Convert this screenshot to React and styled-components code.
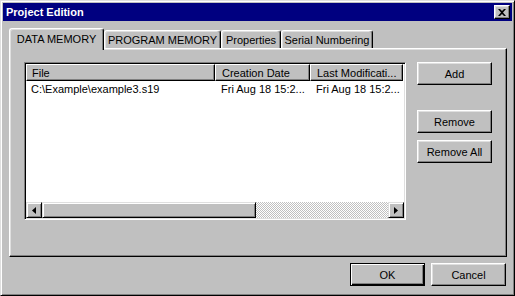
import React from 'react';
import styled, { createGlobalStyle } from 'styled-components';

const GlobalStyle = createGlobalStyle`
  body {
    margin: 0;
    background: #c0c0c0;
    font-family: "Liberation Sans", Arial, sans-serif;
    font-size: 11px;
  }
`;

const Window = styled.div`
  width: 515px;
  height: 296px;
  box-sizing: border-box;
  background: #c0c0c0;
  border: 1px solid;
  border-color: #dfdfdf #000 #000 #dfdfdf;
  box-shadow: inset 1px 1px #fff, inset -1px -1px #808080;
  padding: 2px;
  display: flex;
  flex-direction: column;
`;

const TitleBar = styled.div`
  height: 18px;
  background: #000080;
  color: #fff;
  font-weight: bold;
  font-size: 11px;
  display: flex;
  align-items: center;
  justify-content: space-between;
  padding: 0 2px 0 3px;
`;

const CloseButton = styled.div`
  width: 16px;
  height: 14px;
  box-sizing: border-box;
  background: #c0c0c0;
  border: 1px solid;
  border-color: #fff #000 #000 #fff;
  box-shadow: inset -1px -1px #808080, inset 1px 1px #dfdfdf;
  display: flex;
  align-items: center;
  justify-content: center;
`;

const Body = styled.div`
  padding: 7px 5px 0 6px;
  display: flex;
  flex-direction: column;
`;

const TabRow = styled.div`
  display: flex;
  align-items: flex-end;
  height: 20px;
`;

const Tab = styled.div`
  position: relative;
  z-index: ${(p) => (p.$active ? 2 : 1)};
  box-sizing: border-box;
  width: ${(p) => p.$w}px;
  height: ${(p) => (p.$active ? 22 : 18)}px;
  margin-bottom: ${(p) => (p.$active ? -2 : 0)}px;
  background: #c0c0c0;
  border-top: 1px solid #fff;
  border-left: 1px solid #fff;
  border-right: 1px solid #000;
  border-radius: 3px 3px 0 0;
  box-shadow: inset -1px 0 #808080, inset 1px 1px #dfdfdf;
  display: flex;
  align-items: ${(p) => (p.$active ? 'flex-start' : 'center')};
  padding-top: ${(p) => (p.$active ? 4 : 0)}px;
  justify-content: center;
  color: #000;
  white-space: nowrap;
`;

const Panel = styled.div`
  height: 209px;
  box-sizing: border-box;
  border: 1px solid;
  border-color: #fff #000 #000 #fff;
  box-shadow: inset -1px -1px #808080, inset 1px 1px #dfdfdf;
  padding: 13px 0 0 14px;
  display: flex;
  gap: 11px;
  align-items: flex-start;
`;

const ListView = styled.div`
  width: 382px;
  height: 158px;
  box-sizing: border-box;
  background: #fff;
  border: 1px solid;
  border-color: #808080 #fff #fff #808080;
  box-shadow: inset 1px 1px #000, inset -1px -1px #dfdfdf;
  padding: 1px;
  display: flex;
  flex-direction: column;
`;

const HeaderRow = styled.div`
  display: flex;
  height: 17px;
`;

const HeaderCell = styled.div`
  box-sizing: border-box;
  width: ${(p) => p.$w}px;
  height: 17px;
  background: #c0c0c0;
  border: 1px solid;
  border-color: #fff #000 #000 #fff;
  box-shadow: inset -1px -1px #808080;
  padding-left: ${(p) => p.$pad}px;
  display: flex;
  align-items: center;
  white-space: nowrap;
  overflow: hidden;
`;

const Rows = styled.div`
  flex: 1;
  padding-top: 1px;
`;

const Row = styled.div`
  display: flex;
  height: 14px;
  align-items: center;
`;

const Cell = styled.div`
  box-sizing: border-box;
  width: ${(p) => p.$w}px;
  padding-left: ${(p) => p.$pad}px;
  white-space: nowrap;
  overflow: hidden;
`;

const ScrollBar = styled.div`
  display: flex;
  height: 16px;
`;

const ArrowButton = styled.div`
  width: 16px;
  height: 16px;
  box-sizing: border-box;
  background: #c0c0c0;
  border: 1px solid;
  border-color: #dfdfdf #000 #000 #dfdfdf;
  box-shadow: inset 1px 1px #fff, inset -1px -1px #808080;
  display: flex;
  align-items: center;
  justify-content: center;
`;

const Thumb = styled(ArrowButton)`
  width: ${(p) => p.$w}px;
`;

const Track = styled.div`
  flex: 1;
  background: repeating-conic-gradient(#fff 0 25%, #c0c0c0 0 50%) 0 0 / 2px 2px;
`;

const SideButtons = styled.div`
  display: flex;
  flex-direction: column;
`;

const Button = styled.div`
  width: 75px;
  height: 23px;
  box-sizing: border-box;
  background: #c0c0c0;
  border: 1px solid;
  border-color: ${(p) => (p.$default ? '#000' : '#fff #000 #000 #fff')};
  box-shadow: ${(p) =>
    p.$default
      ? 'inset 1px 1px #fff, inset -1px -1px #000, inset -2px -2px #808080'
      : 'inset -1px -1px #808080, inset 1px 1px #dfdfdf'};
  display: flex;
  align-items: center;
  justify-content: center;
  color: #000;
  margin-top: ${(p) => p.$top || 0}px;
`;

const Footer = styled.div`
  display: flex;
  justify-content: flex-end;
  gap: 6px;
  margin-top: 6px;
  padding-right: 1px;
`;

const columns = [
  { title: 'File', w: 189, pad: 5 },
  { title: 'Creation Date', w: 95, pad: 6 },
  { title: 'Last Modificati...', w: 93, pad: 6 },
];

const rows = [['C:\\Example\\example3.s19', 'Fri Aug 18 15:2...', 'Fri Aug 18 15:2...']];

const tabs = [
  { label: 'DATA MEMORY', w: 95, active: true },
  { label: 'PROGRAM MEMORY', w: 117 },
  { label: 'Properties', w: 60 },
  { label: 'Serial Numbering', w: 92 },
];

export default function App() {
  return (
    <>
      <GlobalStyle />
      <Window>
        <TitleBar>
          <span>Project Edition</span>
          <CloseButton>
            <svg width="8" height="7" viewBox="0 0 8 7">
              <path d="M0 0h2l2 2 2-2h2L5 3.5 8 7H6L4 5 2 7H0l3-3.5z" fill="#000" />
            </svg>
          </CloseButton>
        </TitleBar>
        <Body>
          <TabRow>
            {tabs.map((t) => (
              <Tab key={t.label} $w={t.w} $active={t.active}>
                {t.label}
              </Tab>
            ))}
          </TabRow>
          <Panel>
            <ListView>
              <HeaderRow>
                {columns.map((c) => (
                  <HeaderCell key={c.title} $w={c.w} $pad={c.pad}>
                    {c.title}
                  </HeaderCell>
                ))}
              </HeaderRow>
              <Rows>
                {rows.map((r, i) => (
                  <Row key={i}>
                    {r.map((v, j) => (
                      <Cell key={j} $w={columns[j].w} $pad={columns[j].pad}>
                        {v}
                      </Cell>
                    ))}
                  </Row>
                ))}
              </Rows>
              <ScrollBar>
                <ArrowButton>
                  <svg width="4" height="7" viewBox="0 0 4 7">
                    <path d="M4 0v7L0 3.5z" fill="#000" />
                  </svg>
                </ArrowButton>
                <Thumb $w={214} />
                <Track />
                <ArrowButton>
                  <svg width="4" height="7" viewBox="0 0 4 7">
                    <path d="M0 0v7l4-3.5z" fill="#000" />
                  </svg>
                </ArrowButton>
              </ScrollBar>
            </ListView>
            <SideButtons>
              <Button>Add</Button>
              <Button $top={25}>Remove</Button>
              <Button $top={7}>Remove All</Button>
            </SideButtons>
          </Panel>
          <Footer>
            <Button $default>OK</Button>
            <Button>Cancel</Button>
          </Footer>
        </Body>
      </Window>
    </>
  );
}
